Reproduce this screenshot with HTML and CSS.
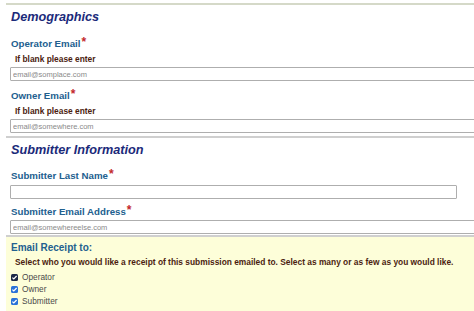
FILE: index.html
```html
<!DOCTYPE html>
<html>
<head>
<meta charset="utf-8">
<link rel="stylesheet" href="styles.css">
</head>
<body>
<div class="page">
  <section class="section top">
    <h2 class="heading">Demographics</h2>
    <div class="label l-first">Operator Email<span class="req">*</span></div>
    <div class="hint">If blank please enter</div>
    <input class="field wide" type="text" placeholder="email@somplace.com">
    <div class="label l-second">Owner Email<span class="req">*</span></div>
    <div class="hint">If blank please enter</div>
    <input class="field wide" type="text" placeholder="email@somewhere.com">
  </section>
  <section class="section mid">
    <h2 class="heading">Submitter Information</h2>
    <div class="label l-sub1">Submitter Last Name<span class="req">*</span></div>
    <input class="field narrow f-sub1" type="text">
    <div class="label l-sub2">Submitter Email Address<span class="req">*</span></div>
    <input class="field wide f-sub2" type="text" placeholder="email@somewhereelse.com">
  </section>
  <section class="section receipt">
    <div class="label receipt-title">Email Receipt to:</div>
    <div class="hint receipt-hint">Select who you would like a receipt of this submission emailed to. Select as many or as few as you would like.</div>
    <div class="checks">
      <div class="check"><span class="box dark"><svg viewBox="0 0 8 8" width="7" height="7"><path d="M1.6 4.1 L3.2 5.7 L6.4 2.3" fill="none" stroke="#fff" stroke-width="1.4"/></svg></span><span class="check-label">Operator</span></div>
      <div class="check"><span class="box"><svg viewBox="0 0 8 8" width="7" height="7"><path d="M1.6 4.1 L3.2 5.7 L6.4 2.3" fill="none" stroke="#fff" stroke-width="1.4"/></svg></span><span class="check-label">Owner</span></div>
      <div class="check"><span class="box"><svg viewBox="0 0 8 8" width="7" height="7"><path d="M1.6 4.1 L3.2 5.7 L6.4 2.3" fill="none" stroke="#fff" stroke-width="1.4"/></svg></span><span class="check-label">Submitter</span></div>
    </div>
  </section>
</div>
</body>
</html>
```
FILE: styles.css
```css
html, body {
  margin: 0;
  padding: 0;
  background: #ffffff;
  width: 474px;
  height: 311px;
  overflow: hidden;
}

body {
  font-family: "Liberation Sans", Arial, sans-serif;
}

.page {
  padding-top: 3px;
  margin-left: 6px;
  overflow: hidden;
}

.section {
  border-top: 2px solid #cfcfcf;
  padding-left: 5px;
  padding-top: 4px;
}

.section.top {
  border-top-color: #d5d9c8;
}

.section.mid {
  margin-top: 3px;
}

.heading {
  margin: 0;
  font-size: 12.7px;
  line-height: 16px;
  font-weight: bold;
  font-style: italic;
  color: #1b2a7a;
}

.label {
  font-size: 9.7px;
  line-height: 12px;
  font-weight: bold;
  color: #22608f;
  white-space: nowrap;
}

.req {
  color: #c3282b;
  font-size: 12px;
  vertical-align: 1px;
  margin-left: 1px;
  line-height: 0;
}

.l-first { margin-top: 13px; }
.l-second { margin-top: 9px; }
.l-sub1 { margin-top: 12px; }
.l-sub2 { margin-top: 7px; }

.hint {
  font-size: 8.4px;
  line-height: 10px;
  font-weight: bold;
  color: #4b1d10;
  margin-top: 4px;
  margin-left: 4px;
  white-space: nowrap;
}

.field {
  display: block;
  box-sizing: border-box;
  height: 14px;
  margin: 3px 0 0 -1px;
  padding: 0 2px;
  border: 1px solid #aeaeae;
  border-radius: 1px;
  font-family: "Liberation Sans", Arial, sans-serif;
  font-size: 7.5px;
  color: #333;
  background: #fff;
  outline: none;
}

.field::placeholder {
  color: #8a8a8a;
}

.wide {
  width: 480px;
}

.narrow {
  width: 447px;
}

.f-sub2 {
  margin-top: 2px;
}

.receipt {
  margin-top: 1px;
  background: #fdfed9;
  height: 80px;
  padding-top: 5px;
}

.receipt-title {
  font-size: 10px;
  line-height: 12px;
}

.receipt-hint {
  margin-top: 3px;
}

.checks {
  margin-top: 4px;
  display: flex;
  flex-direction: column;
}

.check {
  display: flex;
  align-items: center;
  gap: 4px;
  height: 12px;
}

.box {
  display: flex;
  width: 7px;
  height: 7px;
  border-radius: 1.5px;
  background: #2a73d8;
  overflow: hidden;
}

.box.dark {
  background: #1c2947;
}

.check-label {
  font-size: 8.3px;
  line-height: 12px;
  color: #4a4a4a;
}
```
